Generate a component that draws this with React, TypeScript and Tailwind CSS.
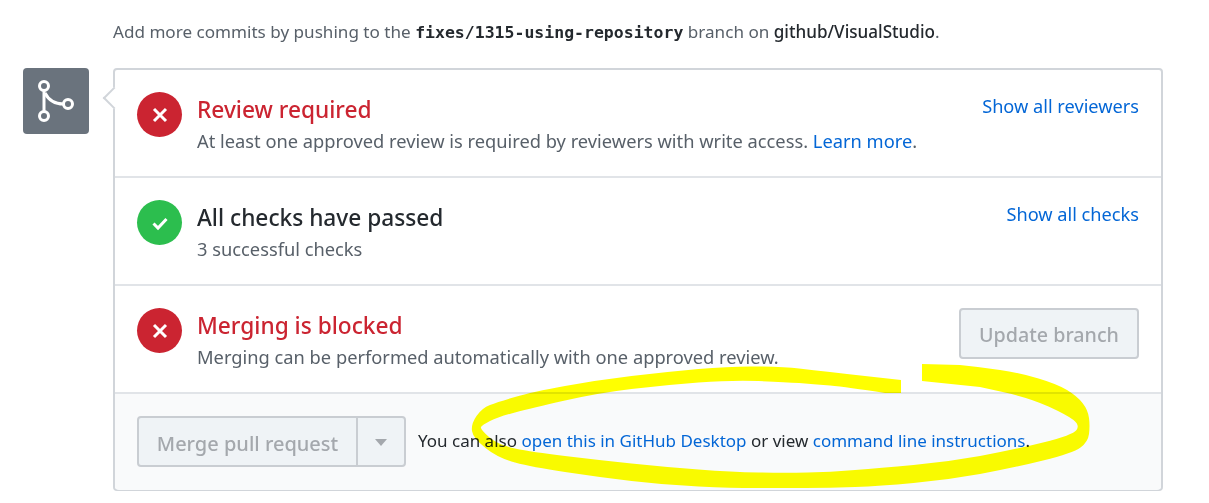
function MergeIcon() {
  return (
    <svg width="66" height="66" viewBox="0 0 66 66" fill="none" stroke="#fff" strokeWidth="3">
      <circle cx="21" cy="18" r="4.5" />
      <circle cx="21" cy="48" r="4.5" />
      <circle cx="45" cy="36" r="4.5" />
      <path d="M21 22.5V43.5" />
      <path d="M22 25C25 31 31 36 40.5 36" />
    </svg>
  );
}

function StatusIcon({ ok }: { ok?: boolean }) {
  return (
    <span className={`grid h-[45px] w-[45px] shrink-0 place-items-center rounded-full ${ok ? "bg-[#2cbe4e]" : "bg-[#cb2431]"}`}>
      <svg width="18" height="18" viewBox="0 0 18 18" fill="none" stroke="#fff" strokeWidth="3">
        {ok ? <path d="M2.5 9.5L7 14L15.5 5" /> : <path d="M3 3L15 15M15 3L3 15" />}
      </svg>
    </span>
  );
}

type RowProps = {
  title: string;
  titleClass: string;
  ok?: boolean;
  children: React.ReactNode;
  right: React.ReactNode;
};

function Row({ title, titleClass, ok, children, right }: RowProps) {
  return (
    <div className="flex h-[108px] items-start gap-[15px] border-b-2 border-[#e1e4e8] pt-[22px] pr-[22px] pl-[22px]">
      <StatusIcon ok={ok} />
      <div className="min-w-0 flex-1 pt-[3px]">
        <h3 className={`text-[22.7px] leading-[30px] font-medium ${titleClass}`}>{title}</h3>
        <p className="mt-[3px] text-[18.3px] leading-[26px] text-[#586069]">{children}</p>
      </div>
      {right}
    </div>
  );
}

const outer: number[][] = [
  [980, 367], [1020, 373], [1057, 384], [1077, 396], [1088, 410], [1090, 426], [1088, 442], [1073, 453],
  [1013, 468], [947, 480], [880, 486], [830, 488], [780, 488], [732, 488], [665, 485], [598, 477],
  [532, 467], [498, 458], [473, 438], [471, 424], [482, 408], [498, 402], [532, 392], [598, 380],
  [665, 372], [732, 366], [785, 367], [813, 370], [847, 374],
];

const inner: number[][] = [
  [847, 387], [813, 384], [785, 382], [732, 380], [665, 385], [598, 393], [532, 408], [498, 417],
  [482, 425], [480, 429], [498, 445], [532, 452], [598, 460], [665, 467], [732, 472], [785, 473],
  [830, 472], [880, 468], [947, 462], [1013, 450], [1073, 435], [1080, 425], [1067, 415], [1030, 398],
  [980, 387],
];

// rounds a list of points off into quadratic curves, the ends stay where they are
function smooth(points: number[][]) {
  let d = "";
  for (let i = 0; i < points.length - 1; i++) {
    const [x, y] = points[i];
    const [nx, ny] = points[i + 1];
    d += `Q${x} ${y} ${(x + nx) / 2} ${(y + ny) / 2}`;
  }
  const [lx, ly] = points[points.length - 1];
  return `${d}L${lx} ${ly}`;
}

const highlight = `M922 364L960 365${smooth(outer)}L901 380L901 393L885 393${smooth(inner)}L922 381Z`;

export default function App() {
  return (
    <div className="relative h-[503px] w-[1209px] overflow-hidden bg-white pt-[20px] pl-[23px] font-['Noto_Sans',sans-serif]">
      <p className="ml-[90px] h-[48px] text-[17.1px] leading-[24px] text-[#586069]">
        Add more commits by pushing to the{" "}
        <code className="font-['DejaVu_Sans_Mono',monospace] text-[16.5px] font-bold text-[#24292e]">fixes/1315-using-repository</code>{" "}
        branch on <span className="font-medium text-[#24292e]">github/VisualStudio</span>.
      </p>

      <div className="flex items-start">
        <div className="h-[66px] w-[66px] shrink-0 rounded-[4px] bg-[#6a737d]">
          <MergeIcon />
        </div>

        <div className="relative ml-[24px] h-[423px] w-[1050px] rounded-[4px] border-2 border-[#d1d5da]">
          <span className="absolute top-[20px] left-[-9px] h-[16px] w-[16px] rotate-45 border-b-2 border-l-2 border-[#d1d5da] bg-white" />

          <Row
            title="Review required"
            titleClass="text-[#cb2431]"
            right={<a className="mt-[1px] text-[18.2px] leading-[26px] text-[#0366d6]">Show all reviewers</a>}
          >
            At least one approved review is required by reviewers with write access.{" "}
            <a className="text-[#0366d6]">Learn more</a>.
          </Row>

          <Row
            ok
            title="All checks have passed"
            titleClass="text-[#24292e]"
            right={<a className="mt-[1px] text-[18.2px] leading-[26px] text-[#0366d6]">Show all checks</a>}
          >
            3 successful checks
          </Row>

          <Row
            title="Merging is blocked"
            titleClass="text-[#cb2431]"
            right={
              <button className="h-[51px] w-[180px] rounded-[4px] border-2 border-[#c9cdd2] bg-[#eff3f6] pt-[3px] text-[19.7px] font-medium text-[#a4a8ad]">
                Update branch
              </button>
            }
          >
            Merging can be performed automatically with one approved review.
          </Row>

          <div className="flex h-[96px] items-start rounded-b-[4px] bg-[#f9fafb] pt-[22px] pl-[22px]">
            <div className="flex h-[51px] w-[269px] rounded-[4px] border-2 border-[#c9cdd2] bg-[#eff3f6] text-[#a4a8ad]">
              <span className="grid w-[219px] place-items-center border-r-2 border-[#c9cdd2] pt-[4px] text-[20px] font-medium">Merge pull request</span>
              <span className="grid flex-1 place-items-center pt-[2px]">
                <span className="h-0 w-0 border-x-[6px] border-t-[7px] border-x-transparent border-t-[#a4a8ad]" />
              </span>
            </div>
            <p className="mt-[12px] ml-[12px] text-[17px] leading-[26px] text-[#24292e]">
              You can also <a className="text-[#0366d6]">open this in GitHub Desktop</a> or view{" "}
              <a className="text-[#0366d6]">command line instructions</a>.
            </p>
          </div>
        </div>
      </div>

      {/* hand drawn highlight on top of the screenshot */}
      <svg className="pointer-events-none absolute top-0 left-0 mix-blend-multiply" width="1209" height="503" viewBox="0 0 1209 503">
        <path fill="#ffff00" d={highlight} />
      </svg>
    </div>
  );
}
